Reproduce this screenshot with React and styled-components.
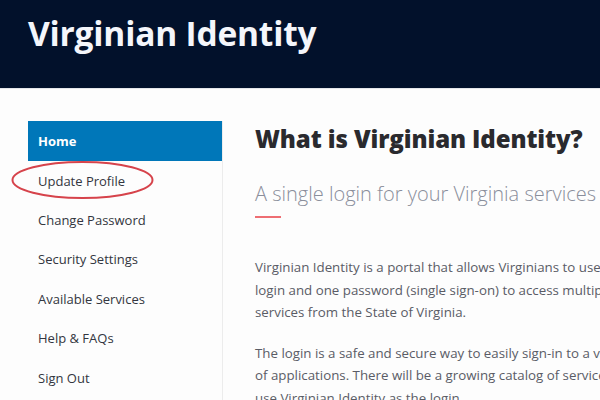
import React from 'react';
import styled, { createGlobalStyle } from 'styled-components';

const GlobalStyle = createGlobalStyle`
  html, body {
    margin: 0;
    padding: 0;
    background: #fdfdfd;
    font-family: 'Open Sans', 'Noto Sans', sans-serif;
  }
`;

const Page = styled.div`
  width: 600px;
  height: 400px;
  overflow: hidden;
  background: #fdfdfd;
`;

const Header = styled.header`
  height: 89px;
  background: #02112b;
  border-bottom: 1px solid #e4e6ea;
  display: flex;
  align-items: flex-start;
  padding: 10px 0 0 28px;
  box-sizing: border-box;
`;

const Brand = styled.h1`
  margin: 0;
  color: #f4f6fb;
  font-size: 33.5px;
  font-weight: 700;
  letter-spacing: -0.2px;
`;

const Body = styled.div`
  display: flex;
  padding: 32px 0 0 28px;
  gap: 32px;
`;

const Sidebar = styled.nav`
  width: 194px;
  flex-shrink: 0;
  border-right: 1px solid #ececec;
  height: 300px;
`;

const NavItem = styled.div`
  position: relative;
  height: ${({ active }) => (active ? '40px' : '39.4px')};
  display: flex;
  align-items: center;
  padding-left: 10px;
  font-size: 13px;
  color: ${({ active }) => (active ? '#ffffff' : '#333640')};
  font-weight: ${({ active }) => (active ? 700 : 400)};
  background: ${({ active }) => (active ? '#0077b9' : 'transparent')};
`;

const Circle = styled.svg`
  position: absolute;
  left: -17px;
  top: 0;
  width: 143px;
  height: 38px;
  overflow: visible;
`;

const Main = styled.main`
  flex: 1;
  min-width: 0;
  white-space: nowrap;
`;

const Title = styled.h2`
  margin: 0;
  font-size: 24px;
  font-weight: 800;
  color: #2a2a2e;
  letter-spacing: -0.1px;
  line-height: 35px;
`;

const Subtitle = styled.p`
  position: relative;
  margin: 24px 0 0;
  font-size: 20px;
  font-weight: 300;
  color: #8a8e9b;
  line-height: 28px;
  padding-bottom: 10px;

  &::after {
    content: '';
    position: absolute;
    left: 0;
    bottom: 0;
    width: 26px;
    height: 2px;
    background: #ee6e73;
  }
`;

const Paragraph = styled.p`
  margin: ${({ first }) => (first ? '38px' : '17.5px')} 0 0;
  font-size: 13.3px;
  line-height: 22.7px;
  color: #5a5c66;
`;

const items = [
  'Update Profile',
  'Change Password',
  'Security Settings',
  'Available Services',
  'Help & FAQs',
  'Sign Out'
];

const App = () => (
  <Page>
    <GlobalStyle />
    <Header>
      <Brand>Virginian Identity</Brand>
    </Header>
    <Body>
      <Sidebar>
        <NavItem active>Home</NavItem>
        {items.map((item) => (
          <NavItem key={item}>
            {item}
            {item === 'Update Profile' && (
              <Circle viewBox="0 0 143 38">
                <ellipse cx="71.5" cy="19" rx="70" ry="18" fill="none" stroke="#d6434b" strokeWidth="2" />
              </Circle>
            )}
          </NavItem>
        ))}
      </Sidebar>
      <Main>
        <Title>What is Virginian Identity?</Title>
        <Subtitle>A single login for your Virginia services</Subtitle>
        <Paragraph first>
          Virginian Identity is a portal that allows Virginians to use one
          <br />
          login and one password (single sign-on) to access multiple
          <br />
          services from the State of Virginia.
        </Paragraph>
        <Paragraph>
          The login is a safe and secure way to easily sign-in to a variety
          <br />
          of applications. There will be a growing catalog of services that
          <br />
          use Virginian Identity as the login.
        </Paragraph>
      </Main>
    </Body>
  </Page>
);

export default App;
